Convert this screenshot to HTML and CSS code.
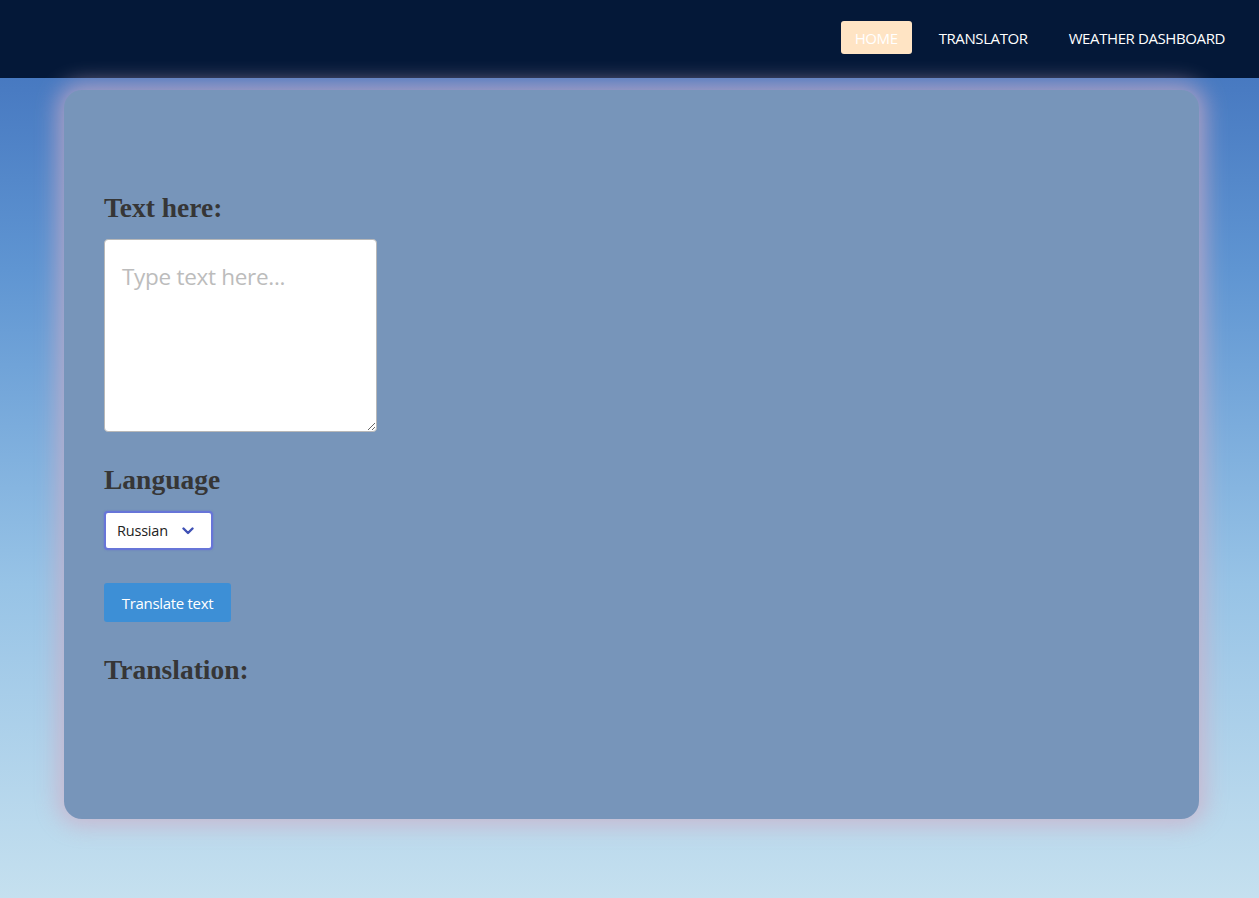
FILE: index.html
```html
<!DOCTYPE html>
<html lang="en">
<head>
<meta charset="utf-8">
<title>Translator</title>
<link rel="stylesheet" href="styles.css">
</head>
<body>
<nav class="navbar">
  <ul class="nav-links">
    <li><a class="nav-link active" href="#">HOME</a></li>
    <li><a class="nav-link" href="#">TRANSLATOR</a></li>
    <li><a class="nav-link" href="#">WEATHER DASHBOARD</a></li>
  </ul>
</nav>
<main class="card">
  <h2 class="label">Text here:</h2>
  <textarea class="text-input" placeholder="Type text here..."></textarea>
  <h2 class="label">Language</h2>
  <div class="select-box">
    <span class="select-value">Russian</span>
    <svg class="chevron" width="12" height="8" viewBox="0 0 12 8"><path d="M1.5 1.5 L6 6 L10.5 1.5" fill="none" stroke="#3f51b5" stroke-width="2.4" stroke-linecap="round" stroke-linejoin="round"/></svg>
  </div>
  <button class="translate-btn">Translate text</button>
  <h2 class="label">Translation:</h2>
</main>
</body>
</html>
```
FILE: styles.css
```css
html, body {
  margin: 0;
  padding: 0;
}
body {
  min-height: 898px;
  background: linear-gradient(180deg, #3e6eba 0%, #5f95d2 30%, #97c3e6 65%, #c5e0ef 100%);
  font-family: "Open Sans", "Noto Sans", sans-serif;
  overflow: hidden;
}
.navbar {
  height: 78px;
  background: #041838;
  display: flex;
  justify-content: flex-end;
  align-items: flex-start;
}
.nav-links {
  list-style: none;
  margin: 21px 20px 0 0;
  padding: 0;
  display: flex;
  gap: 13px;
}
.nav-link {
  display: block;
  height: 33px;
  line-height: 34px;
  padding: 0 14px;
  color: #ffffff;
  text-decoration: none;
  font-size: 15px;
  letter-spacing: -0.4px;
  border-radius: 3px;
}
.nav-link.active {
  background: #ffe4c4;
}
.card {
  width: 1135px;
  height: 729px;
  box-sizing: border-box;
  margin: 12px 0 0 64px;
  padding: 102px 40px 0 40px;
  background: #7795ba;
  border-radius: 18px;
  box-shadow: 0 0 22px 6px rgba(205, 172, 198, 0.75);
  display: flex;
  flex-direction: column;
  align-items: flex-start;
}
.label {
  font-family: "Liberation Serif", "Times New Roman", serif;
  font-weight: bold;
  font-size: 27.5px;
  line-height: 32px;
  color: #363636;
  margin: 0;
}
.text-input {
  margin-top: 15px;
  width: 273px;
  height: 193px;
  box-sizing: border-box;
  border: 1px solid #b8b8b8;
  border-radius: 4px;
  padding: 21px 17px;
  font-family: "Open Sans", "Noto Sans", sans-serif;
  font-size: 22.5px;
  resize: both;
  background: #ffffff;
}
.text-input::placeholder {
  color: #bcbcbc;
  letter-spacing: -0.3px;
}
.text-input + .label {
  margin-top: 32px;
}
.select-box {
  margin-top: 15px;
  width: 109px;
  height: 39px;
  box-sizing: border-box;
  border: 2px solid #6775d8;
  border-radius: 4px;
  background: #ffffff;
  box-shadow: 0 0 2px rgba(90, 100, 210, 0.6);
  display: flex;
  align-items: center;
  padding: 0 17px 0 11px;
  justify-content: space-between;
}
.select-value {
  font-size: 14.5px;
  color: #222;
  letter-spacing: -0.2px;
}
.chevron {
  display: block;
}
.translate-btn {
  margin-top: 33px;
  width: 127px;
  height: 39px;
  border: none;
  border-radius: 3px;
  background: #3d8fd6;
  color: #ffffff;
  font-family: "Open Sans", "Noto Sans", sans-serif;
  font-size: 15px;
  letter-spacing: -0.3px;
  padding: 0;
}
.translate-btn + .label {
  margin-top: 32px;
}
```
